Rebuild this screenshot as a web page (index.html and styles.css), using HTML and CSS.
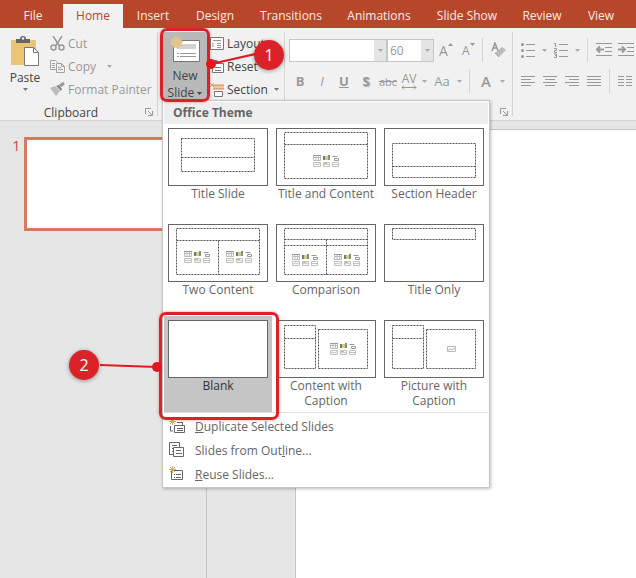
FILE: index.html
```
<!DOCTYPE html>
<html lang="en">
<head>
    <meta charset="UTF-8">
    <meta name="viewport" content="width=device-width, initial-scale=1.0">
    <title>New Slide - Presentation</title>
    <link rel="stylesheet" href="styles.css">
</head>
<body>
    <!-- Shared icons -->
    <svg class="defs" width="0" height="0">
        <symbol id="caret" viewBox="0 0 5 3"><path d="M0 0h5L2.500 3z" fill="currentColor"/></symbol>
        <symbol id="launcher" viewBox="0 0 8 8"><path d="M.5 6V.5H6M3 3l4 4M7.500 3v4.500H3" fill="none" stroke="currentColor"/></symbol>
        <symbol id="mini" viewBox="0 0 9 6"><path d="M.5.5h8v5h-8zM1 4.500l2-1.500 2 1 3-2" fill="none" stroke="#bbb"/></symbol>
        <symbol id="content" viewBox="0 0 27 12">
            <path d="M.5.5h7v5h-7zM.5 2.500h7M3 .5v5M5.500.5v5" fill="none" stroke="#bcbcbc"/>
            <path d="M0 .5h8" stroke="#999"/>
            <path d="M10 1h2v4h-2z" fill="#777"/><path d="M12 1h3v4h-3z" fill="#d6c98c"/><path d="M15 0h2v5h-2z" fill="#7d9484"/>
            <path d="M19.500 1.500h5M21.500 3.500h4v2h-4z" fill="none" stroke="#999"/>
            <path d="M.5 7.500h7v4h-7zM1 10l2-1 2 1 3-2M10.500 7.500h6v4h-6zM11 10l2-1 2 1 2-1M19.500 7.500h6v4h-6zM20 9.500h6" fill="none" stroke="#c2c2c2"/>
            <path d="M11 8h3v1h-3z" fill="#cdbb7c"/>
        </symbol>
    </svg>

    <nav class="tabs">
        <a href="#">File</a>
        <a href="#" class="active">Home</a>
        <a href="#">Insert</a>
        <a href="#">Design</a>
        <a href="#">Transitions</a>
        <a href="#">Animations</a>
        <a href="#">Slide Show</a>
        <a href="#">Review</a>
        <a href="#">View</a>
    </nav>

    <div class="ribbon">
        <section class="group clipboard">
            <div class="group-body">
                <button class="big paste">
                    <svg width="30" height="31" viewBox="0 0 30 31">
                        <path d="M1 4h25v25H1z" fill="#ebc573"/>
                        <path d="M6 3h4a3 3 0 0 1 6 0h4v4H6z" fill="#666"/>
                        <circle cx="13" cy="2.500" r="1.200" fill="#f1f1f1"/>
                        <path d="M14.500 11.500h9l5 5v13h-14z" fill="#fff" stroke="#777"/>
                        <path d="M23.500 11.500v5h5" fill="none" stroke="#777"/>
                    </svg>
                    Paste
                    <svg class="caret"><use href="#caret"/></svg>
                </button>
                <div class="commands muted">
                    <button>
                        <svg width="15" height="15" viewBox="0 0 15 15" fill="none" stroke="#999" stroke-width="1.500"><path d="M3 0l6.500 10M12 0L5.500 10"/><circle cx="3.500" cy="11.500" r="2.500"/><circle cx="11.500" cy="11.500" r="2.500"/></svg>
                        Cut
                    </button>
                    <button>
                        <svg width="15" height="15" viewBox="0 0 15 15" fill="#f1f1f1" stroke="#a3a3a3"><path d="M.5 1.500h5l2 2v7h-7z"/><path d="M2 4.500h3M2 6.500h3M2 8.500h3"/><path d="M6.500 4.500h5l3 3v6h-8zM11.500 4.500v3h3"/><path d="M8 8.500h3M8 10.500h5"/></svg>
                        Copy
                        <svg class="caret"><use href="#caret"/></svg>
                    </button>
                    <button>
                        <svg width="15" height="15" viewBox="0 0 15 15"><path d="M0 6l5-2 5 5-4 5z" fill="#bcbcbc"/><path d="M6 4l5 5 1-2-3-4z" fill="#888"/><path d="M10 4l4-3" stroke="#999" stroke-width="3"/></svg>
                        Format Painter
                    </button>
                </div>
            </div>
            <div class="group-name">Clipboard <button class="launch" aria-label="Clipboard options"><svg width="8" height="8"><use href="#launcher"/></svg></button></div>
        </section>

        <section class="group slides">
            <div class="new-slide">
                <button class="big new-button">
                    <svg width="30" height="27" viewBox="0 0 30 27">
                        <path d="M3.500 4.500h26v21h-26z" fill="#fff" stroke="#777"/>
                        <path d="M7 8h19v5H7z" fill="#d2d2d2"/>
                        <path d="M7 17.500h2M7 20.500h2M10 17.500h16M10 20.500h16" stroke="#999"/>
                        <path d="M6 0l1.500 2 2.500-1 .5 3 2.500 1-1.500 2.500 1 2.500-3 .5L8 13l-2-1.500L3.500 12 3 9.500 0 8l1.500-2L1 3l2.500-.5z" fill="#e3c48c"/>
                    </svg>
                    <span class="new-label">
                        <span>New</span>
                        <span>Slide <svg class="caret"><use href="#caret"/></svg></span>
                    </span>
                </button>

                <!-- New Slide gallery -->
                <div class="menu">
                    <h2>Office Theme</h2>
                    <div class="gallery">
                        <button class="layout">
                            <svg class="thumb" viewBox="0 0 100 58"><path d="M13.500 10.500h73v33h-73zM13.500 29.500h73"/></svg>
                            Title Slide
                        </button>
                        <button class="layout">
                            <svg class="thumb" viewBox="0 0 100 58"><path d="M8.500 4.500h83v46h-83zM8.500 16.500h83"/><use href="#content" x="37" y="27" width="27" height="12"/></svg>
                            Title and Content
                        </button>
                        <button class="layout">
                            <svg class="thumb" viewBox="0 0 100 58"><path d="M8.500 15.500h83v34h-83zM8.500 38.500h83"/></svg>
                            Section Header
                        </button>
                        <button class="layout">
                            <svg class="thumb" viewBox="0 0 100 58"><path d="M8.500 4.500h83v46h-83zM8.500 16.500h83M50.500 16.500v34"/><use href="#content" x="16" y="27" width="27" height="12"/><use href="#content" x="58" y="27" width="27" height="12"/></svg>
                            Two Content
                        </button>
                        <button class="layout">
                            <svg class="thumb" viewBox="0 0 100 58"><path d="M8.500 4.500h83v46h-83zM8.500 15.500h83M8.500 21.500h83M50.500 15.500v35"/><use href="#content" x="16" y="30" width="27" height="12"/><use href="#content" x="58" y="30" width="27" height="12"/></svg>
                            Comparison
                        </button>
                        <button class="layout">
                            <svg class="thumb" viewBox="0 0 100 58"><path d="M8.500 4.500h83v11h-83z"/></svg>
                            Title Only
                        </button>
                        <button class="layout selected">
                            <svg class="thumb" viewBox="0 0 100 58"></svg>
                            Blank
                        </button>
                        <button class="layout">
                            <svg class="thumb" viewBox="0 0 100 58"><path d="M8.500 5.500h31v43h-31zM8.500 18.500h31M42.500 9.500h49v39h-49z"/><use href="#content" x="54" y="23" width="27" height="12"/></svg>
                            Content with Caption
                        </button>
                        <button class="layout">
                            <svg class="thumb" viewBox="0 0 100 58"><path d="M8.500 5.500h31v43h-31zM8.500 18.500h31M42.500 9.500h49v39h-49z"/><use href="#mini" x="63" y="26" width="9" height="6"/></svg>
                            Picture with Caption
                        </button>
                    </div>
                    <div class="menu-items">
                        <button>
                            <svg width="16" height="16" viewBox="0 0 16 16" fill="#fff" stroke="#666"><path d="M8 4.500h5.500V7M1.500 8v5H4"/><path d="M5.500 7.500h10v7h-10zM8 10.500h6M8 12.500h6"/><path d="M3.500 0v7M0 3.500h7M1 1l5 5M6 1L1 6" stroke="#d1b25e"/></svg>
                            <span><u>D</u>uplicate Selected Slides</span>
                        </button>
                        <button>
                            <svg width="16" height="16" viewBox="0 0 16 16" fill="#fff" stroke="#666"><path d="M.5.5h10v12H.5zM3 3.500h5M3 6.500h2M3 9.500h1"/><path d="M4.500 5.500h10v9h-10zM7 8.500h5M7 11.500h6"/></svg>
                            <span>Slides from Out<u>l</u>ine...</span>
                        </button>
                        <button>
                            <svg width="16" height="16" viewBox="0 0 16 16" fill="#fff" stroke="#666"><path d="M2.500 4.500h11v9h-11zM5 8.500h1M7 8.500h5M5 11.500h1M7 11.500h5"/><path d="M3.500 0v7M0 3.500h7M1 1l5 5M6 1L1 6" stroke="#d1b25e"/></svg>
                            <span><u>R</u>euse Slides...</span>
                        </button>
                    </div>
                    <div class="callout callout-two">
                        <div class="frame"></div>
                        <svg width="62" height="12" viewBox="0 0 62 12"><path d="M0 4l57 2" stroke="#e01a22" stroke-width="2"/><circle cx="57" cy="6" r="5" fill="#e8141c"/></svg>
                        <span class="badge">2</span>
                    </div>
                </div>

                <div class="callout callout-one">
                    <div class="frame"></div>
                    <svg width="56" height="20" viewBox="0 0 56 20"><path d="M5 14L54 3" stroke="#e01a22" stroke-width="2"/><circle cx="5" cy="14" r="5" fill="#e8141c"/></svg>
                    <span class="badge">1</span>
                </div>
            </div>
            <div class="commands">
                <button>
                    <svg width="14" height="14" viewBox="0 0 14 14" fill="#fff" stroke="#777"><path d="M.5.5h13v12H.5z"/><path d="M3 3.500h8M3 6v4M7 6.500h4M7 8.500h4M7 10.500h4" stroke="#999"/></svg>
                    Layout <svg class="caret"><use href="#caret"/></svg>
                </button>
                <button>
                    <svg width="14" height="14" viewBox="0 0 14 14" fill="#fff" stroke="#777"><path d="M2.500 3.500h11v9h-11zM5 7.500h6M5 10.500h6"/><path d="M1 5q2-6 7-3" fill="none" stroke="#3b75b4" stroke-width="2"/></svg>
                    Reset
                </button>
                <button>
                    <svg width="14" height="14" viewBox="0 0 14 14" fill="#fff" stroke="#777"><path d="M4.500 8.500h8v5h-8z"/><path d="M3 5.500h11M3 2.500h11" stroke="#dfa06a" stroke-width="2"/><path d="M0 0l4 4M0 4l4-4" stroke="#d1b25e"/></svg>
                    Section <svg class="caret"><use href="#caret"/></svg>
                </button>
            </div>
        </section>

        <section class="group font">
            <div class="tools">
                <span class="combo family"><select aria-label="Font"><option></option></select><svg class="caret"><use href="#caret"/></svg></span>
                <span class="combo size"><select aria-label="Font size"><option>60</option></select><svg class="caret"><use href="#caret"/></svg></span>
                <button class="grow" aria-label="Increase font size">A<svg width="5" height="3" viewBox="0 0 5 3"><path d="M0 3h5L2.500 0z" fill="#999"/></svg></button>
                <button class="grow shrink" aria-label="Decrease font size">A<svg width="5" height="3"><use href="#caret"/></svg></button>
                <i class="rule"></i>
                <button class="clear" aria-label="Clear formatting"><svg width="16" height="16" viewBox="0 0 16 16"><path d="M1 9l3-8 3 8M2 6h4" fill="none" stroke="#999" stroke-width="1.500"/><path d="M4 11l7-6 4 3-7 7z" fill="#bbb"/><path d="M4 11l4 4" stroke="#999"/></svg></button>
            </div>
            <div class="tools letters">
                <button><b>B</b></button>
                <button><em>I</em></button>
                <button><b><u>U</u></b></button>
                <button><b class="shadow">S</b></button>
                <button><s>abc</s></button>
                <button class="spacing">AV<svg width="16" height="5" viewBox="0 0 16 5"><path d="M1 2.500h14M3 .5l-2 2 2 2M13 .5l2 2-2 2" fill="none" stroke="#999"/></svg></button>
                <svg class="caret"><use href="#caret"/></svg>
                <button class="case">Aa</button>
                <svg class="caret"><use href="#caret"/></svg>
                <i class="rule"></i>
                <button class="color">A</button>
                <svg class="caret"><use href="#caret"/></svg>
            </div>
            <button class="launch" aria-label="Font options"><svg width="8" height="8"><use href="#launcher"/></svg></button>
        </section>

        <section class="group paragraph">
            <div class="tools">
                <button aria-label="Bullets"><svg width="14" height="16" viewBox="0 0 14 16"><path d="M5 2.500h9M5 8.500h9M5 14.500h9" stroke="#999"/><g fill="#999"><circle cx="1.500" cy="2.500" r="1.500"/><circle cx="1.500" cy="8.500" r="1.500"/><circle cx="1.500" cy="14.500" r="1.500"/></g></svg></button>
                <svg class="caret"><use href="#caret"/></svg>
                <button aria-label="Numbering"><svg width="14" height="16" viewBox="0 0 14 16" fill="none" stroke="#999"><path d="M5 2.500h9M5 8.500h9M5 14.500h9M0 1.500h1.500V5M0 6.500h2.500v2H.5v2h2.500M0 12h2.500v3.500H0M1 13.500h2"/></svg></button>
                <svg class="caret"><use href="#caret"/></svg>
                <i class="rule"></i>
                <button aria-label="Decrease indent"><svg width="16" height="14" viewBox="0 0 16 14" fill="none" stroke="#999"><path d="M0 .5h16M9 4.500h7M9 8.500h7M0 12.500h16"/><path d="M1 6.500h7M4 3.500l-3 3 3 3" stroke-width="2"/></svg></button>
                <button aria-label="Increase indent"><svg width="16" height="14" viewBox="0 0 16 14" fill="none" stroke="#999"><path d="M0 .5h16M9 4.500h7M9 8.500h7M0 12.500h16"/><path d="M0 6.500h7M4 3.500l3 3-3 3" stroke-width="2"/></svg></button>
            </div>
            <div class="tools aligns">
                <button aria-label="Align left"><svg width="14" height="11" viewBox="0 0 14 11"><path d="M0 .5h14M0 3.500h10M0 6.500h14M0 9.500h10" stroke="#999"/></svg></button>
                <button aria-label="Center"><svg width="14" height="11" viewBox="0 0 14 11"><path d="M0 .5h14M2 3.500h10M0 6.500h14M2 9.500h10" stroke="#999"/></svg></button>
                <button aria-label="Align right"><svg width="14" height="11" viewBox="0 0 14 11"><path d="M0 .5h14M4 3.500h10M0 6.500h14M4 9.500h10" stroke="#999"/></svg></button>
                <button aria-label="Justify"><svg width="14" height="11" viewBox="0 0 14 11"><path d="M0 .5h14M0 3.500h14M0 6.500h14M0 9.500h14" stroke="#999"/></svg></button>
                <i class="rule"></i>
                <button aria-label="Columns"><svg width="14" height="11" viewBox="0 0 14 11"><path d="M0 .5h6M0 3.500h6M0 6.500h6M0 9.500h6M8 .5h6M8 3.500h6M8 6.500h6M8 9.500h6" stroke="#999"/></svg></button>
            </div>
        </section>
    </div>

    <main class="workspace">
        <aside class="slide-list">
            <span class="number">1</span>
            <div class="slide-thumb"></div>
        </aside>
        <div class="editor">
            <div class="slide"></div>
        </div>
    </main>
</body>
</html>
```

FILE: styles.css
```
* {
    box-sizing: border-box;
}
body {
    margin: 0;
    min-height: 100vh;
    display: flex;
    flex-direction: column;
    overflow: hidden;
    font-family: "Open Sans", "Noto Sans", sans-serif;
    font-size: 12px;
    line-height: 15px;
    color: #444;
    background-color: #e6e6e6;
}
svg {
    display: block;
    flex: none;
}
.defs {
    position: absolute;
}
button {
    flex: none;
    font: inherit;
    color: inherit;
    background: none;
    border: none;
    padding: 0;
    cursor: pointer;
}
.caret {
    width: 5px;
    height: 3px;
    color: #777;
}

/* Tabs */
.tabs {
    display: grid;
    grid-template-columns: 60px 60px 60px 64px 88px 88px 88px 62px 56px;
    height: 28px;
    padding: 4px 0 0 3px;
    background-color: #b7472a;
}
.tabs a {
    line-height: 24px;
    text-align: center;
    color: #fbe9e4;
    text-decoration: none;
    white-space: nowrap;
}
.tabs .active {
    color: #b7472a;
    background-color: #f1f1f1;
}

/* Ribbon */
.ribbon {
    display: flex;
    height: 93px;
    padding-top: 4px;
    background-color: #f1f1f1;
    border-bottom: 1px solid #d2d2d2;
}
.group {
    position: relative;
    flex: none;
    height: 84px;
    border-right: 1px solid #d4d4d4;
}
.clipboard {
    width: 158px;
}
.slides {
    display: flex;
    width: 127px;
    padding-left: 3px;
}
.font {
    width: 228px;
    padding-left: 4px;
}
.paragraph {
    flex: 1;
    min-width: 0;
    padding-left: 8px;
    border-right: none;
}
.group-body {
    display: flex;
    height: 73px;
}
.big {
    display: flex;
    flex-direction: column;
    align-items: center;
}
.paste {
    width: 50px;
    padding-top: 4px;
    gap: 3px;
}
.commands button {
    display: flex;
    align-items: center;
    gap: 3px;
    height: 23px;
    white-space: nowrap;
}
.commands .caret {
    margin-left: 3px;
}
.muted {
    color: #999;
}
.muted .caret {
    margin-left: 8px;
    color: #aaa;
}
.group-name {
    display: flex;
    justify-content: center;
    width: 142px;
}
.launch {
    position: absolute;
    right: 4px;
    bottom: 0;
    color: #999;
}

/* New Slide button */
.new-slide {
    position: relative;
    flex: none;
    width: 48px;
    margin-right: 1px;
}
.new-button {
    width: 48px;
    height: 68px;
    padding-top: 4px;
    gap: 4px;
    background-color: #b9b9b9;
}
.new-label {
    display: flex;
    flex-direction: column;
    line-height: 17px;
}
.new-button .caret {
    display: inline-block;
    vertical-align: middle;
    color: #444;
}

/* Gallery menu */
.menu {
    position: absolute;
    top: 68px;
    left: 1px;
    z-index: 1;
    width: 328px;
    padding: 1px;
    background-color: #fff;
    border: 1px solid #c6c6c6;
    box-shadow: 1px 1px 3px rgba(0, 0, 0, 0.25);
}
.menu h2 {
    margin: 0;
    padding-left: 9px;
    font-size: 12px;
    line-height: 22px;
    color: #666;
    background-color: #eee;
}
.gallery {
    display: grid;
    grid-template-columns: repeat(3, 108px);
    grid-auto-rows: 96px;
    border-bottom: 1px solid #e1e1e1;
}
.layout {
    display: flex;
    flex-direction: column;
    align-items: center;
    padding: 0 4px;
    color: #666;
}
.thumb {
    width: 100px;
    height: 58px;
    margin-top: 4px;
    fill: none;
    stroke: #555;
    stroke-dasharray: 2 1;
    background-color: #fff;
    outline: 1px solid #666;
    outline-offset: -1px;
}
.thumb use {
    stroke: none;
    stroke-dasharray: none;
}
.layout.selected {
    color: #333;
    background-color: #c5c5c5;
}
.menu-items {
    display: flex;
    flex-direction: column;
    padding-top: 1px;
}
.menu-items button {
    display: flex;
    align-items: center;
    gap: 10px;
    height: 24px;
    padding-left: 5px;
    color: #666;
}

/* Numbered callouts */
.callout {
    position: absolute;
    z-index: 2;
}
.callout-one {
    top: -4px;
    left: -1px;
    width: 50px;
    height: 74px;
}
.callout-two {
    top: 211px;
    left: -4px;
    width: 120px;
    height: 108px;
}
.frame {
    height: 100%;
    border: 3px solid #d9232b;
    border-radius: 7px;
    box-shadow: 0 0 3px rgba(217, 35, 43, 0.5);
}
.callout svg {
    position: absolute;
}
.callout-one svg {
    top: 22px;
    left: 46px;
}
.callout-two svg {
    top: 49px;
    right: 117px;
}
.badge {
    position: absolute;
    width: 30px;
    height: 30px;
    border-radius: 50%;
    font-size: 16px;
    line-height: 30px;
    text-align: center;
    color: #fff;
    background-color: #dc2229;
    box-shadow: 0 1px 4px rgba(0, 0, 0, 0.4);
}
.callout-one .badge {
    top: 12px;
    left: 94px;
}
.callout-two .badge {
    top: 38px;
    left: -90px;
}

/* Font and paragraph tools */
.tools {
    display: flex;
    align-items: center;
    height: 36px;
    color: #999;
}
.tools .caret {
    color: #aaa;
}
.rule {
    flex: none;
    width: 1px;
    height: 24px;
    background-color: #d4d4d4;
}
.combo {
    position: relative;
    display: block;
    flex: none;
    height: 23px;
}
.family {
    width: 98px;
}
.size {
    width: 47px;
}
.combo select {
    appearance: none;
    display: block;
    width: 100%;
    height: 23px;
    padding: 0 2px;
    font: inherit;
    color: #999;
    background: linear-gradient(#e4e4e4, #e4e4e4) right / 12px 100% no-repeat #fff;
    border: 1px solid #c6c6c6;
    border-radius: 0;
}
.combo .caret {
    position: absolute;
    top: 10px;
    right: 4px;
}
.grow {
    display: flex;
    width: 16px;
    margin-left: 5px;
    font-size: 14px;
}
.shrink {
    margin-left: 7px;
    font-size: 12px;
}
.font .tools .rule {
    margin: 0 8px 0 4px;
}
.letters {
    height: 26px;
    font-size: 13px;
}
.letters button {
    width: 22px;
    text-align: center;
}
.letters s {
    font-size: 11px;
}
.shadow {
    text-shadow: 1px 1px 1px #aaa;
}
.letters .spacing {
    width: 20px;
    font-size: 12px;
    line-height: 12px;
}
.spacing svg {
    margin: 0 auto;
}
.letters .case {
    width: 24px;
}
.letters .caret {
    margin: 0 3px;
}
.font .letters .rule {
    margin: 0 5px 0 4px;
}
.letters .color {
    font-size: 15px;
    font-weight: 600;
}
.paragraph .caret {
    margin: 0 7px;
}
.paragraph .rule {
    margin-right: 8px;
}
.paragraph button + button {
    margin-left: 6px;
}
.aligns {
    height: 26px;
    gap: 8px;
}
.paragraph .aligns button,
.paragraph .aligns .rule {
    margin: 0;
}

/* Workspace */
.workspace {
    display: flex;
    flex: 1;
}
.slide-list {
    display: flex;
    align-items: flex-start;
    width: 207px;
    padding: 16px 0 0 12px;
    border-right: 1px solid #c6c6c6;
}
.number {
    flex: none;
    width: 12px;
    font-size: 15px;
    line-height: 16px;
    color: #c8504a;
}
.slide-thumb {
    flex: none;
    width: 168px;
    height: 94px;
    background-color: #fff;
    border: 3px solid #d97860;
}
.editor {
    display: flex;
    flex: 1;
    padding: 8px 0 0 88px;
}
.slide {
    flex: 1;
    background-color: #fff;
    border-top: 1px solid #c6c6c6;
    border-left: 1px solid #c6c6c6;
}
```
